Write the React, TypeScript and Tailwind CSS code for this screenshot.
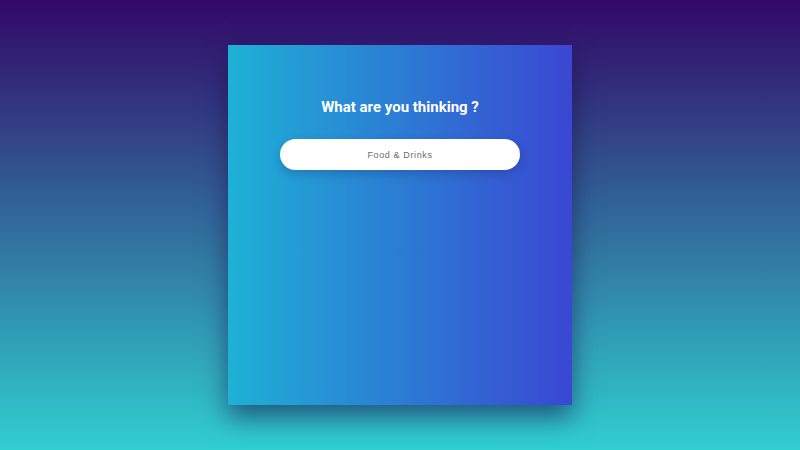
export default function App() {
  return (
    <div className="flex h-[450px] w-[800px] items-start justify-center bg-linear-to-t/srgb from-[#30cfd0] to-[#330867] pt-[45px] font-['Roboto',sans-serif]">
      <div className="flex h-[360px] w-[344px] flex-col items-center bg-linear-to-r/srgb from-[#1eb1d6] to-[#3a47d2] pt-[53px] shadow-[0_12px_24px_rgba(20,10,70,0.55)]">
        <h1 className="text-[15px] font-bold leading-[18px] text-white">
          What are you thinking ?
        </h1>
        <input
          type="text"
          placeholder="Food & Drinks"
          className="mt-[23px] h-[31px] w-[240px] rounded-full bg-white text-center font-['Liberation_Sans',Arial,sans-serif] text-[9px] tracking-[0.07em] text-gray-600 shadow-[0_4px_10px_rgba(20,30,90,0.25)] outline-none placeholder:text-[#6b6b6b]"
        />
      </div>
    </div>
  );
}
